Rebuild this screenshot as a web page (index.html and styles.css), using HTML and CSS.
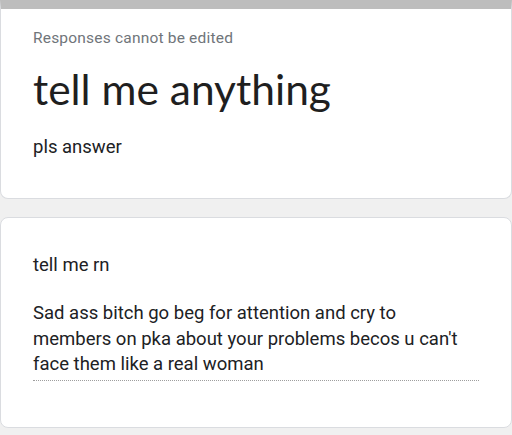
FILE: index.html
```html
<!DOCTYPE html>
<html lang="en">
<head>
	<meta charset="utf-8">
	<title>tell me anything</title>
	<link rel="stylesheet" href="styles.css">
</head>
<body>
	<main class="form">
		<section class="card card-header">
			<p class="note">Responses cannot be edited</p>
			<h1 class="title">tell me anything</h1>
			<p class="desc">pls answer</p>
		</section>
		<section class="card">
			<div class="question">tell me rn</div>
			<div class="answer">Sad ass bitch go beg for attention and cry to members on pka about your problems becos u can't face them like a real woman</div>
		</section>
	</main>
</body>
</html>
```

FILE: styles.css
```css
body {
	margin: 0;
	background: #f0f0f0;
	font-family: Roboto, "Liberation Sans", Arial, sans-serif;
	color: #202124;
	-webkit-font-smoothing: antialiased;
}
.form {
	display: flex;
	flex-direction: column;
	gap: 18px;
}
.card {
	background: #fff;
	border: 1px solid #dadce0;
	border-radius: 8px;
	padding: 35px 32px 46px;
}
.card-header {
	border-top: 9px solid #bdbdbd;
	border-radius: 0 0 8px 8px;
	padding-top: 19px;
	padding-bottom: 39px;
}
.note {
	margin: 0;
	font-size: 15.5px;
	line-height: 20px;
	letter-spacing: 0.2px;
	color: #70757a;
}
.title {
	margin: 15px 0 0;
	font-family: Lato, "Open Sans", sans-serif;
	font-weight: 400;
	font-size: 42.5px;
	line-height: 51px;
	color: #1f1f1f;
}
.desc {
	margin: 21px 0 0;
	font-size: 18.5px;
	line-height: 24px;
}
.question {
	font-size: 18.5px;
	line-height: 24px;
}
.answer {
	box-sizing: border-box;
	margin-top: 24px;
	width: 446px;
	padding: 0 12px 2px 0;
	font-size: 18.5px;
	line-height: 25.5px;
	border-bottom: 1px dotted #9e9e9e;
}
```
